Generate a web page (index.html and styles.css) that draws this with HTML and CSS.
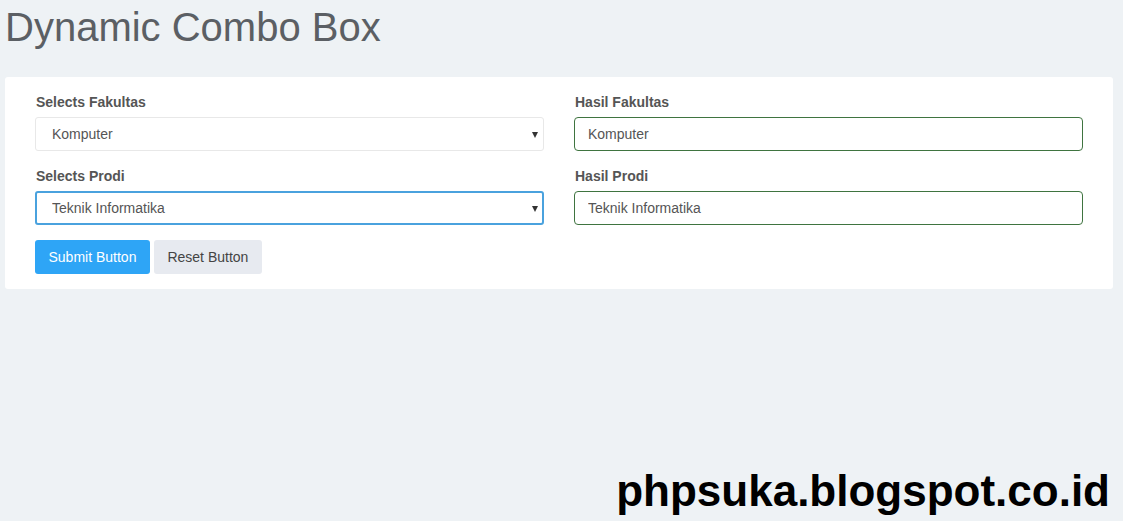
FILE: index.html
```html
<!DOCTYPE html>
<html>
<head>
<meta charset="utf-8">
<link rel="stylesheet" href="styles.css">
</head>
<body>
<h1 class="title">Dynamic Combo Box</h1>
<div class="card">
  <form class="grid">
    <div class="group">
      <label class="label">Selects Fakultas</label>
      <div class="select-wrap">
        <select class="select"><option>Komputer</option></select>
      </div>
    </div>
    <div class="group">
      <label class="label">Hasil Fakultas</label>
      <input class="result" type="text" value="Komputer">
    </div>
    <div class="group">
      <label class="label">Selects Prodi</label>
      <div class="select-wrap">
        <select class="select focus"><option>Teknik Informatika</option></select>
      </div>
    </div>
    <div class="group">
      <label class="label">Hasil Prodi</label>
      <input class="result" type="text" value="Teknik Informatika">
    </div>
    <div class="actions">
      <button type="button" class="btn btn-primary">Submit Button</button>
      <button type="button" class="btn btn-default">Reset Button</button>
    </div>
  </form>
</div>
<div class="watermark">phpsuka.blogspot.co.id</div>
</body>
</html>
```
FILE: styles.css
```css
html, body {
  margin: 0;
  padding: 0;
}
body {
  background: #eef2f5;
  font-family: "Liberation Sans", Arial, sans-serif;
  font-size: 14px;
  color: #555;
  width: 1123px;
  height: 521px;
  position: relative;
  overflow: hidden;
}
.title {
  margin: 0;
  padding: 5px 0 0 5px;
  font-size: 40px;
  line-height: 44px;
  font-weight: normal;
  color: #5b5f64;
}
.card {
  margin: 28px 10px 0 5px;
  background: #fff;
  border-radius: 3px;
  padding: 16px 30px 15px;
}
.grid {
  display: grid;
  grid-template-columns: 1fr 1fr;
  column-gap: 30px;
  row-gap: 16px;
}
.group {
  display: flex;
  flex-direction: column;
}
.label {
  font-weight: bold;
  font-size: 14px;
  line-height: 18px;
  color: #555;
  margin-left: 1px;
  margin-bottom: 6px;
}
.select-wrap {
  position: relative;
}
.select-wrap::after {
  content: "";
  position: absolute;
  right: 6px;
  top: 15px;
  border-left: 3px solid transparent;
  border-right: 3px solid transparent;
  border-top: 6px solid #333;
  pointer-events: none;
}
.select {
  -webkit-appearance: none;
  appearance: none;
  display: block;
  width: 100%;
  height: 34px;
  box-sizing: border-box;
  border: 1px solid #e8e8e8;
  border-radius: 3px;
  background: #fff;
  font-family: inherit;
  font-size: 14px;
  color: #555;
  padding: 0 16px;
  outline: none;
}
.select.focus {
  border: 2px solid #4aa2de;
  padding: 0 15px;
}
.result {
  display: block;
  width: 100%;
  height: 34px;
  box-sizing: border-box;
  border: 1px solid #3f7440;
  border-radius: 4px;
  background: #fff;
  font-family: inherit;
  font-size: 14px;
  color: #555;
  padding: 0 13px;
  outline: none;
}
.actions {
  grid-column: 1 / 3;
  display: flex;
  gap: 4px;
  margin-top: -1px;
}
.btn {
  height: 34px;
  border: none;
  border-radius: 3px;
  font-family: inherit;
  font-size: 14px;
  padding: 0 13.5px;
  cursor: pointer;
}
.btn-primary {
  background: #2ea5f6;
  color: #fff;
}
.btn-default {
  background: #e7eaf0;
  color: #444;
}
.watermark {
  position: absolute;
  right: 13px;
  bottom: 5px;
  font-family: "Liberation Sans", Arial, sans-serif;
  font-weight: bold;
  font-size: 44px;
  line-height: 50px;
  color: #000;
}
```
